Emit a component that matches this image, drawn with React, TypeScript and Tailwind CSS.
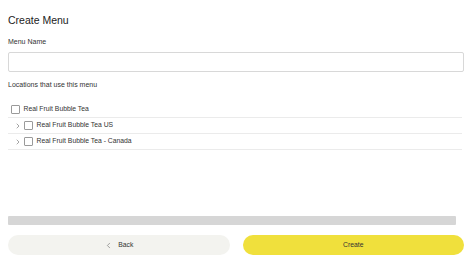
import { ChevronLeft, ChevronRight } from "lucide-react";

type Location = {
  name: string;
  children?: Location[];
};

const locations: Location[] = [
  { name: "Real Fruit Bubble Tea" },
  { name: "Real Fruit Bubble Tea US", children: [] },
  { name: "Real Fruit Bubble Tea - Canada", children: [] },
];

function Checkbox() {
  return <span className="block h-[9px] w-[9px] shrink-0 rounded-[1px] border border-[#9a9a9a] bg-white" />;
}

function TreeRow({ location }: { location: Location }) {
  const nested = Boolean(location.children);
  return (
    <div className="flex h-[16px] items-center border-b border-[#ebebeb]">
      {nested ? (
        <ChevronRight className="ml-[6px] h-[8px] w-[8px] text-[#555]" strokeWidth={1.6} />
      ) : null}
      <span className={nested ? "ml-[2px]" : "ml-[3px]"}>
        <Checkbox />
      </span>
      <span className="ml-[3.5px] text-[6.8px] leading-none text-[#333]">{location.name}</span>
    </div>
  );
}

export default function App() {
  return (
    <div
      className="flex h-[267px] w-[474px] flex-col bg-white pl-[8px] pr-[10px]"
      style={{ fontFamily: '"Liberation Sans", Arial, sans-serif' }}
    >
      <h1 className="pt-[14px] text-[10.5px] leading-[12px] text-[#222]">Create Menu</h1>

      <label className="mt-[12px] text-[7px] leading-[8px] text-[#333]">Menu Name</label>
      <input
        type="text"
        className="mt-[6px] h-[20px] w-full rounded-[2px] border border-[#d8d8d8] bg-white outline-none"
      />

      <p className="mt-[9px] text-[7px] leading-[8px] text-[#333]">Locations that use this menu</p>

      <div className="mt-[13px] mr-[2px]">
        {locations.map((location) => (
          <TreeRow key={location.name} location={location} />
        ))}
      </div>

      <div className="mt-auto mr-[8px] h-[9px] rounded-[1px] bg-[#d6d6d6]" />

      <div className="mt-[10px] mb-[12px] flex gap-[13px]">
        <button className="flex h-[20px] flex-1 items-center justify-center rounded-full bg-[#f3f3ef] text-[6.8px] text-[#333]">
          <ChevronLeft className="mr-[5px] h-[9px] w-[9px] text-[#555]" strokeWidth={1.4} />
          Back
        </button>
        <button className="flex h-[20px] flex-1 items-center justify-center rounded-full bg-[#f0e03c] text-[6.8px] text-[#333]">
          Create
        </button>
      </div>
    </div>
  );
}
